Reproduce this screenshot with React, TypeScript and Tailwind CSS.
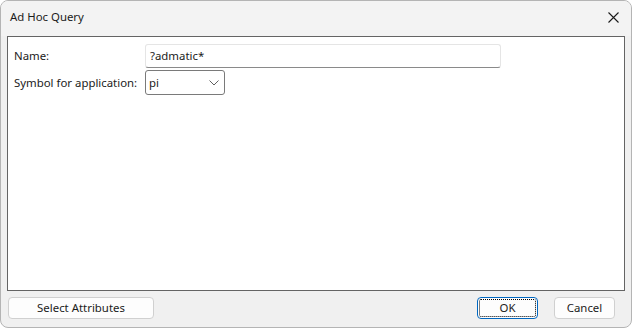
import React from "react";

const font = { fontFamily: '"Noto Sans", "Open Sans", sans-serif' };

const ChevronDown = () => (
  <svg width="10" height="6" viewBox="0 0 10 6" fill="none" stroke="#606060" strokeWidth="1">
    <path d="M0.5 0.5 L5 5 L9.5 0.5" />
  </svg>
);

const CloseIcon = () => (
  <svg width="11" height="11" viewBox="0 0 11 11" fill="none" stroke="#1a1a1a" strokeWidth="1.1">
    <path d="M0.5 0.5 L10.5 10.5 M10.5 0.5 L0.5 10.5" />
  </svg>
);

export default function App() {
  return (
    <div className="w-[632px] h-[328px] bg-white" style={font}>
      <div className="w-full h-full flex flex-col rounded-lg border border-[#b4b4b4] bg-[#f0f0f0] overflow-hidden text-[11.4px] text-[#1b1b1b]">
        {/* title bar */}
        <div className="h-[35px] flex items-center justify-between pl-[9px] pr-[12px] bg-[#f3f3f3] shrink-0">
          <span className="-mt-[3px]">Ad Hoc Query</span>
          <span className="-mt-[3px]"><CloseIcon /></span>
        </div>

        {/* content panel */}
        <div className="mx-[6px] flex-1 bg-white border border-[#646464] pt-[7px] pl-[6px] flex flex-col gap-[2px]">
          <div className="flex items-center h-[24px]">
            <span className="w-[131px]">Name:</span>
            <div className="w-[356px] h-[24px] flex items-center px-[4px] border border-[#e5e5e5] border-b-[#8a8a8a] rounded-[3px]">
              ?admatic*
            </div>
          </div>
          <div className="flex items-center h-[25px]">
            <span className="w-[131px]">Symbol for application:</span>
            <div className="w-[80px] h-[25px] flex items-center justify-between pl-[3px] pr-[5px] border border-[#7a7a7a] rounded-[3px]">
              <span>pi</span>
              <ChevronDown />
            </div>
          </div>
        </div>

        {/* footer buttons */}
        <div className="h-[36px] shrink-0 flex items-center px-[7px] pb-[2px]">
          <button className="w-[146px] h-[22px] rounded-[4px] border border-[#d0d0d0] bg-[#fdfdfd]">
            Select Attributes
          </button>
          <div className="flex-1" />
          <button className="w-[61px] h-[22px] rounded-[4px] border border-[#0067c0] bg-[#fdfdfd] p-[1px]">
            <span className="w-full h-full flex items-center justify-center border border-dotted border-[#000] rounded-[2px]">OK</span>
          </button>
          <button className="ml-[16px] mr-[9px] w-[61px] h-[22px] rounded-[4px] border border-[#d0d0d0] bg-[#fdfdfd]">
            Cancel
          </button>
        </div>
      </div>
    </div>
  );
}
